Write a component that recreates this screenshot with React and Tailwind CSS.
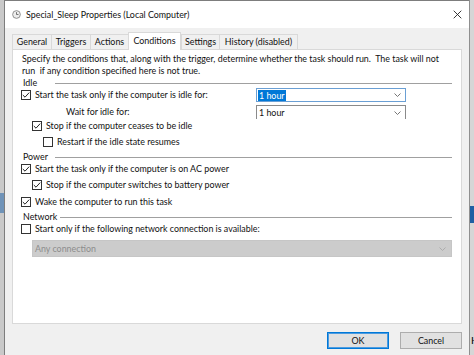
import React from "react";

function Check({ checked }) {
  return (
    <span className="w-[10px] h-[10px] border border-[#333333] bg-white flex items-center justify-center shrink-0">
      {checked && (
        <svg width="8" height="8" viewBox="0 0 8 8">
          <path d="M0.8 4 L3 6.2 L7.2 1.6" stroke="#222222" strokeWidth="1" fill="none" />
        </svg>
      )}
    </span>
  );
}

function Row({ checked, className, children }) {
  return (
    <div className={`flex items-center gap-[4px] h-[12px] ${className}`}>
      <Check checked={checked} />
      <span>{children}</span>
    </div>
  );
}

function Section({ label, className }) {
  return (
    <div className={`flex items-center h-[12px] pl-[10px] pr-[9px] ${className}`}>
      <span className="min-w-[29px] mr-[3px]">{label}</span>
      <div className="flex-1 h-px bg-[#a0a0a0]" />
    </div>
  );
}

function Chevron({ color }) {
  return (
    <svg width="7" height="4" viewBox="0 0 7 4">
      <path d="M0.5 0.5 L3.5 3.5 L6.5 0.5" stroke={color} strokeWidth="0.9" fill="none" />
    </svg>
  );
}

const tabs = [
  ["General", "w-[39px]"],
  ["Triggers", "w-[39px]"],
  ["Actions", "w-[38px]"],
  ["Conditions", "w-[53px]"],
  ["Settings", "w-[38px]"],
  ["History (disabled)", "w-[79px]"],
];

export default function App() {
  return (
    <div className="w-[474px] h-[355px] bg-[#d4d4d4] flex overflow-hidden text-[8.9px] text-[#111111] font-['Lato',sans-serif]">
      <div className="w-[4px] shrink-0 flex flex-col bg-[#c9c9c9]">
        <div className="h-[193px]" />
        <div className="h-[20px] bg-[#6f93b8]" />
      </div>
      <div className="w-[465px] shrink-0 flex flex-col bg-[#f0f0f0] border-l border-t border-[#7d7d7d]">
        <div className="h-[27px] bg-white flex items-center pl-[7px] pr-[7px]">
          <svg width="9" height="9" viewBox="0 0 10 10" className="mr-[5px]">
            <circle cx="5" cy="5" r="4.3" fill="#ececec" stroke="#7a7a7a" strokeWidth="0.9" />
            <path d="M5 2.4 V5 H7.2" stroke="#555555" strokeWidth="0.9" fill="none" />
          </svg>
          <span>Special_Sleep Properties (Local Computer)</span>
          <span className="ml-auto">
            <svg width="9" height="9" viewBox="0 0 9 9">
              <path d="M0.7 0.7 L8.3 8.3 M8.3 0.7 L0.7 8.3" stroke="#222222" strokeWidth="0.9" />
            </svg>
          </span>
        </div>
        <div className="flex-1 flex flex-col px-[7px] pt-[4px]">
          <div className="flex items-end h-[17px]">
            {tabs.map(([t, w]) =>
              t === "Conditions" ? (
                <div
                  key={t}
                  className={`${w} h-[18px] bg-white border border-b-0 border-[#d9d9d9] flex items-center justify-center -mb-px z-10 pb-[2px]`}
                >
                  {t}
                </div>
              ) : (
                <div
                  key={t}
                  className={`${w} h-[15px] bg-[#f0f0f0] border border-b-0 border-r-0 border-[#d9d9d9] last:border-r flex items-center justify-center`}
                >
                  {t}
                </div>
              )
            )}
          </div>
          <div className="h-[275px] bg-white border border-[#d9d9d9] flex flex-col pt-[3px]">
            <div className="pl-[9px] leading-[12px]">
              <div>Specify the conditions that, along with the trigger, determine whether the task should run.&nbsp; The task will not</div>
              <div>run&nbsp; if any condition specified here is not true.</div>
            </div>
            <Section label="Idle" />
            <div className="flex items-center h-[12px]">
              <Row checked className="pl-[8px]">Start the task only if the computer is idle for:</Row>
              <div className="ml-auto mr-[55px] w-[150px] h-[14px] border border-[#6a9fd4] flex items-center pl-[1px] pr-[4px] shrink-0">
                <span className="bg-[#0078d7] text-white px-[1px] h-[11px] leading-[11px]">1 hour</span>
                <span className="ml-auto"><Chevron color="#666666" /></span>
              </div>
            </div>
            <div className="flex items-center h-[16px] mt-[3px]">
              <span className="pl-[53px]">Wait for idle for:</span>
              <div className="ml-auto mr-[55px] w-[150px] h-[14px] border border-b-0 border-[#8a8a8a] flex items-center pl-[2px] pr-[4px]">
                <span>1 hour</span>
                <span className="ml-auto"><Chevron color="#666666" /></span>
              </div>
            </div>
            <Row checked className="pl-[19px]">Stop if the computer ceases to be idle</Row>
            <Row className="pl-[30px] mt-[4px]">Restart if the idle state resumes</Row>
            <Section label="Power" className="mt-[3px]" />
            <Row checked className="pl-[8px]">Start the task only if the computer is on AC power</Row>
            <Row checked className="pl-[19px] mt-[4px]">Stop if the computer switches to battery power</Row>
            <Row checked className="pl-[8px] mt-[5px]">Wake the computer to run this task</Row>
            <Section label="Network" className="mt-[3px]" />
            <Row className="pl-[8px]">Start only if the following network connection is available:</Row>
            <div className="ml-[19px] mr-[9px] mt-[5px] h-[17px] bg-[#cccccc] border border-[#c6c6c6] flex items-center pl-[2px] pr-[5px] text-[#8d8d8d]">
              <span>Any connection</span>
              <span className="ml-auto"><Chevron color="#a8a8a8" /></span>
            </div>
          </div>
          <div className="flex justify-end gap-[11px] pt-[8px]">
            <div className="w-[62px] h-[17px] border border-[#0078d7] bg-[#e1e1e1] flex items-center justify-center shadow-[inset_0_0_0_1px_#4c9be0]">OK</div>
            <div className="w-[62px] h-[17px] border border-[#adadad] bg-[#e1e1e1] flex items-center justify-center">Cancel</div>
          </div>
        </div>
      </div>
      <div className="flex-1 min-w-0 overflow-hidden flex flex-col bg-[#d6d6d6] border-l border-[#8f8f8f]">
        <div className="h-[206px]" />
        <div className="h-[17px] bg-[#1f5fa3]" />
        <div className="flex-1" />
        <div className="h-[12px] text-[10px] leading-[12px] text-black pl-[1px]">H</div>
        <div className="h-[9px]" />
      </div>
    </div>
  );
}
